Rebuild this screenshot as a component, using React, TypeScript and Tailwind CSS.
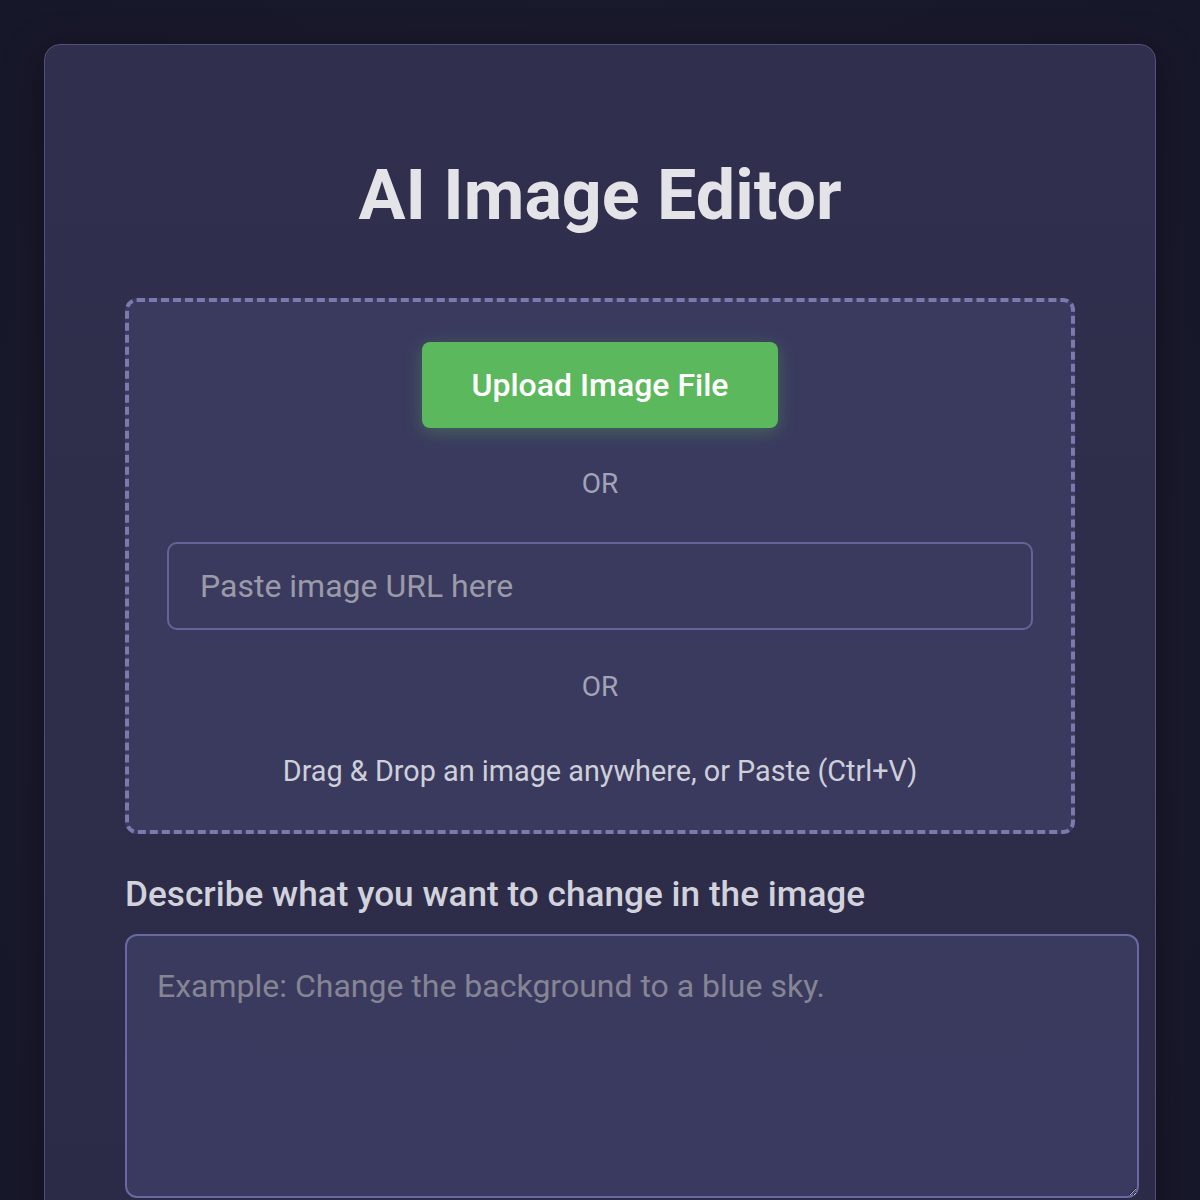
import React from 'react'

export default function App() {
  return (
    <div
      className="min-h-[1200px] w-full overflow-hidden bg-[radial-gradient(ellipse_at_center,#1f1f36_0%,#1a1a2d_60%,#17172a_100%)] pt-[44px]"
      style={{ fontFamily: 'Roboto, "Noto Sans", sans-serif' }}
    >
      <div className="mx-auto w-[1112px] rounded-[16px] border border-[#51507c] bg-gradient-to-b from-[#302f4d] to-[#2c2b47] px-[80px] pt-[80px] pb-[80px] shadow-[0_10px_40px_rgba(0,0,0,0.35)]">
        <h1 className="mt-[35px] mb-[68px] text-center text-[70px] leading-none font-bold text-[#e4e4e8]">
          AI Image Editor
        </h1>

        {/* upload / url / drop zone */}
        <div className="flex flex-col items-center rounded-[12px] border-4 border-dashed border-[#7b79ad] bg-[#3a3a5f] px-[38px] pt-[40px] pb-[43px]">
          <button className="h-[86px] w-[356px] rounded-[8px] bg-[#5cb85c] text-[32px] font-medium text-white shadow-[0_4px_18px_rgba(92,184,92,0.35)]">
            Upload Image File
          </button>
          <div className="mt-[40px] text-[28px] leading-[32px] text-[#a3a3b8]">OR</div>
          <input
            type="text"
            placeholder="Paste image URL here"
            className="mt-[42px] h-[88px] w-full rounded-[10px] border-2 border-[#65649a] bg-[#3a3a5f] px-[31px] text-[32px] text-[#e0e0e8] outline-none placeholder:text-[#9a9aa8]"
          />
          <div className="mt-[41px] text-[28px] leading-[32px] text-[#a3a3b8]">OR</div>
          <p className="mt-[52px] text-[28.8px] leading-[32px] text-[#cfcfda]">
            Drag &amp; Drop an image anywhere, or Paste (Ctrl+V)
          </p>
        </div>

        <label className="mt-[40px] block text-[35.2px] leading-[40px] font-medium text-[#d2d2dc]">
          Describe what you want to change in the image
        </label>
        <textarea
          placeholder="Example: Change the background to a blue sky."
          className="mt-[20px] box-content h-[200px] w-full resize-y rounded-[12px] border-2 border-[#6a68a2] bg-gradient-to-b from-[#3a3a5f] to-[#3a3a60] px-[30px] py-[30px] text-[32px] leading-[40px] text-[#e0e0e8] outline-none placeholder:text-[#858594]"
        />
      </div>
    </div>
  )
}
